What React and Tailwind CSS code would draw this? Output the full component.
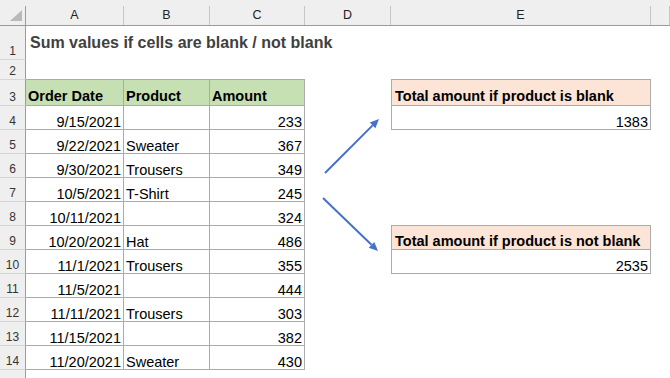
import React from "react";

// Order data shown in columns A–C
const orders = [
  ["9/15/2021", "", 233],
  ["9/22/2021", "Sweater", 367],
  ["9/30/2021", "Trousers", 349],
  ["10/5/2021", "T-Shirt", 245],
  ["10/11/2021", "", 324],
  ["10/20/2021", "Hat", 486],
  ["11/1/2021", "Trousers", 355],
  ["11/5/2021", "", 444],
  ["11/11/2021", "Trousers", 303],
  ["11/15/2021", "", 382],
  ["11/20/2021", "Sweater", 430],
];

const cellBase =
  "box-border flex items-end leading-none whitespace-nowrap overflow-hidden min-w-0";
const tableCell = `${cellBase} border-r border-b border-[#ababab] text-[14.5px] text-black`;

function Corner() {
  return (
    <div className="box-border flex border-b border-[#9b9b9b] bg-[#efefef]">
      <svg viewBox="0 0 25 25" className="flex-1 h-full">
        <polygon points="10,21 22,21 22,10" fill="#b9b9b9" />
      </svg>
      <div className="w-px mt-[6px] bg-[#9b9b9b]" />
    </div>
  );
}

function ColHead({ label }) {
  return (
    <div className="box-border flex border-b border-[#9b9b9b] bg-[#efefef]">
      <div className="flex-1 flex items-end justify-center pb-[4px] leading-none text-[12.5px] text-[#222]">
        {label}
      </div>
      <div className="w-px mt-[6px] bg-[#c6c6c6]" />
    </div>
  );
}

function RowHead({ n }) {
  return (
    <div className="box-border flex items-end justify-center pb-[2px] leading-none border-r border-b border-r-[#9b9b9b] border-b-[#d6d6d6] bg-[#efefef] text-[12px] text-[#333]">
      {n}
    </div>
  );
}

const Blank = () => <div />;

function Arrows() {
  return (
    <svg
      className="absolute inset-0 pointer-events-none"
      width="670"
      height="378"
      viewBox="0 0 670 378"
    >
      <line x1="325" y1="173" x2="372.6" y2="125.4" stroke="#4472c4" strokeWidth="2" />
      <polygon points="379,119 375.4,128.2 369.8,122.6" fill="#4472c4" />
      <line x1="323" y1="198" x2="371.5" y2="244.8" stroke="#4472c4" strokeWidth="2" />
      <polygon points="378,251 368.7,247.7 374.3,241.9" fill="#4472c4" />
    </svg>
  );
}

export default function App() {
  const rows = [];

  orders.forEach(([date, product, amount], i) => {
    const r = i + 4;
    let e = <Blank />;
    if (r === 4 || r === 10) {
      e = (
        <div className={`${cellBase} justify-end pr-[2px] border-x border-b border-[#ababab] text-[14.5px] text-black`}>
          {r === 4 ? 1383 : 2535}
        </div>
      );
    } else if (r === 8) {
      e = <div className="box-border border-b border-[#ababab]" />;
    } else if (r === 9) {
      e = (
        <div className={`${cellBase} pl-[3px] pb-[1px] border-x border-b border-[#ababab] bg-[#fce4d6] text-[14.5px] font-bold text-black`}>
          Total amount if product is not blank
        </div>
      );
    }
    rows.push(
      <React.Fragment key={r}>
        <RowHead n={r} />
        <div className={`${tableCell} justify-end pr-[2px]`}>{date}</div>
        <div className={`${tableCell} pl-[2px]`}>{product}</div>
        <div className={`${tableCell} justify-end pr-[2px]`}>{amount}</div>
        <Blank />
        {e}
        <Blank />
      </React.Fragment>
    );
  });

  return (
    <div className="relative w-[670px] h-[378px] overflow-hidden bg-white font-['Liberation_Sans',Arial,sans-serif]">
      <div className="grid grid-cols-[26px_98px_86px_95px_86px_260px_1fr] grid-rows-[26px_34px_20px_26px_repeat(11,24px)_24px]">
        {/* column letters */}
        <Corner />
        {["A", "B", "C", "D", "E", ""].map((l, i) => (
          <ColHead key={i} label={l} />
        ))}

        {/* row 1: title */}
        <RowHead n={1} />
        <div className="col-span-6 flex items-center pl-[4px] text-[16px] font-bold text-[#404040] whitespace-nowrap">
          Sum values if cells are blank / not blank
        </div>

        {/* row 2 */}
        <RowHead n={2} />
        <div className="border-b border-[#ababab]" />
        <div className="border-b border-[#ababab]" />
        <div className="border-b border-[#ababab]" />
        <Blank />
        <div className="border-b border-[#ababab]" />
        <Blank />

        {/* row 3: headers */}
        <RowHead n={3} />
        <div className={`${tableCell} pl-[2px] pb-[2px] bg-[#c6e0b4] font-bold`}>Order Date</div>
        <div className={`${tableCell} pl-[2px] pb-[2px] bg-[#c6e0b4] font-bold`}>Product</div>
        <div className={`${tableCell} pl-[2px] pb-[2px] bg-[#c6e0b4] font-bold`}>Amount</div>
        <Blank />
        <div className={`${cellBase} pl-[3px] pb-[2px] border-x border-b border-[#ababab] bg-[#fce4d6] text-[14.5px] font-bold text-black`}>
          Total amount if product is blank
        </div>
        <Blank />

        {rows}

        {/* row 15 */}
        <RowHead n={15} />
        <Blank />
        <Blank />
        <Blank />
        <Blank />
        <Blank />
        <Blank />
      </div>
      <Arrows />
    </div>
  );
}
